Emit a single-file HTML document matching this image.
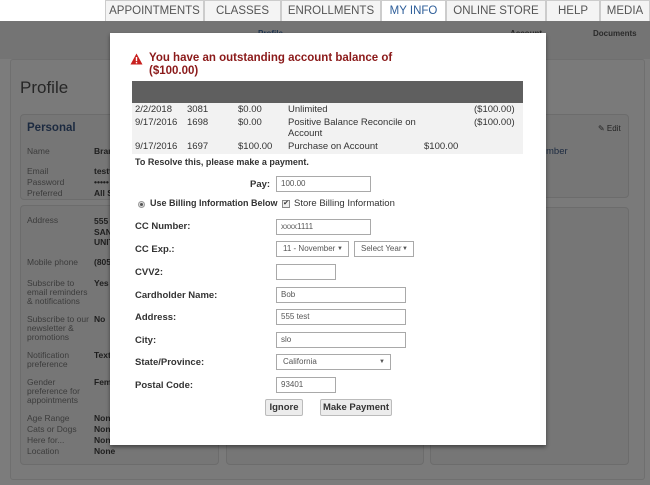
<!DOCTYPE html>
<html><head><meta charset="utf-8">
<style>
*{box-sizing:border-box;margin:0;padding:0}
body{width:650px;height:485px;overflow:hidden;position:relative;background:#7c7c7c;font-family:"Liberation Sans",Arial,sans-serif;font-size:9px;color:#333}
.a{position:absolute}
.tabs{left:0;top:0;width:650px;height:21px;background:#fff}
.tab{position:absolute;top:0;height:21px;border:1px solid #ccc;border-bottom:none;background:#f4f4f4;color:#555;font-size:11.5px;text-align:center;line-height:21px}
.bar{left:0;top:21px;width:650px;height:38px;background:#747474}
.sub{position:absolute;top:29px;font-size:8px;font-weight:bold;color:#2a2a2a}
.panel{left:10px;top:59px;width:635px;height:421px;background:#7a7a7a;border:1px solid #6f6f6f;border-radius:3px}
.card{background:#767676;border:1px solid #6c6c6c;border-radius:4px}
.lbl{position:absolute;left:27px;color:#3c3c3c;font-size:8.5px;line-height:9px}
.val{position:absolute;left:94px;color:#1e1e1e;font-weight:bold;font-size:8.5px;line-height:9px}
.modal{left:110px;top:33px;width:436px;height:412px;background:#fff;box-shadow:0 2px 4px rgba(0,0,0,.45)}
.t{position:absolute;font-size:9.5px;color:#333}
.b{position:absolute;font-size:9.5px;font-weight:bold;color:#333;white-space:nowrap}
.in{position:absolute;border:1px solid #a9a9a9;height:16px;font-size:8px;color:#555;padding-left:4px;line-height:14px;background:#fff}
.sel{position:absolute;border:1px solid #a9a9a9;height:16px;font-size:8px;color:#555;padding-left:6px;line-height:14px;background:#fff}
.sel:after{content:"▼";position:absolute;right:5px;top:0;font-size:6px}
.btn{position:absolute;border:1px solid #bbb;border-radius:2px;background:#ececec;font-size:9.5px;font-weight:bold;color:#333;text-align:center;line-height:15px;height:17px}
</style></head><body>
<div class="a tabs">
<div class="tab" style="left:105px;width:99px">APPOINTMENTS</div>
<div class="tab" style="left:204px;width:77px">CLASSES</div>
<div class="tab" style="left:281px;width:100px">ENROLLMENTS</div>
<div class="tab" style="left:381px;width:65px;background:#fff;color:#2f5f9a">MY INFO</div>
<div class="tab" style="left:446px;width:100px">ONLINE STORE</div>
<div class="tab" style="left:546px;width:54px">HELP</div>
<div class="tab" style="left:600px;width:50px">MEDIA</div>
</div>
<div class="a bar"></div>
<div class="sub" style="left:258px;color:#1f3550">Profile</div>
<div class="sub" style="left:510px">Account</div>
<div class="sub" style="left:593px">Documents</div>
<div class="a panel"></div>
<div class="a" style="left:20px;top:78px;font-size:17px;color:#262626">Profile</div>
<div class="a card" style="left:20px;top:114px;width:199px;height:86px"></div>
<div class="a" style="left:27px;top:122px;font-size:11.5px;font-weight:bold;color:#1c2a40">Personal</div>
<div class="a card" style="left:20px;top:205px;width:199px;height:260px"></div>
<div class="a card" style="left:226px;top:114px;width:198px;height:351px"></div>
<div class="a card" style="left:430px;top:114px;width:199px;height:84px"></div>
<div class="a card" style="left:430px;top:207px;width:199px;height:258px"></div>
<div class="a" style="left:598px;top:124px;font-size:8px;color:#222">✎ Edit</div>
<div class="a" style="left:546px;top:146px;font-size:9.5px;color:#1c2a40">mber</div>
<div class="lbl" style="top:147px">Name</div><div class="val" style="top:147px">Brar</div>
<div class="lbl" style="top:167px">Email</div><div class="val" style="top:167px">testt</div>
<div class="lbl" style="top:178px">Password</div><div class="val" style="top:178px">•••••</div>
<div class="lbl" style="top:189px">Preferred</div><div class="val" style="top:189px">All S</div>
<div class="lbl" style="top:216px">Address</div><div class="val" style="top:216px;line-height:10.5px">555<br>SAN<br>UNIT</div>
<div class="lbl" style="top:258px">Mobile phone</div><div class="val" style="top:258px">(805</div>
<div class="lbl" style="top:279px">Subscribe to<br>email reminders<br>&amp; notifications</div><div class="val" style="top:279px">Yes</div>
<div class="lbl" style="top:315px">Subscribe to our<br>newsletter &amp;<br>promotions</div><div class="val" style="top:315px">No</div>
<div class="lbl" style="top:351px">Notification<br>preference</div><div class="val" style="top:351px">Text</div>
<div class="lbl" style="top:378px">Gender<br>preference for<br>appointments</div><div class="val" style="top:378px">Fem</div>
<div class="lbl" style="top:414px">Age Range</div><div class="val" style="top:414px">None</div>
<div class="lbl" style="top:425px">Cats or Dogs</div><div class="val" style="top:425px">None</div>
<div class="lbl" style="top:436px">Here for...</div><div class="val" style="top:436px">None</div>
<div class="lbl" style="top:447px">Location</div><div class="val" style="top:447px">None</div>

<div class="a modal">
<svg class="a" style="left:20px;top:20px" width="13" height="12" viewBox="0 0 13 12"><path d="M6.5 0.5L12.5 11.5H0.5Z" fill="#c8201e"/><rect x="5.8" y="4" width="1.4" height="4.2" fill="#fff"/><rect x="5.8" y="9" width="1.4" height="1.4" fill="#fff"/></svg>
<div class="a" style="left:39px;top:19px;font-size:11.5px;font-weight:bold;color:#8b1a1a;line-height:13px">You have an outstanding account balance of<br>($100.00)</div>
<div class="a" style="left:22px;top:48px;width:391px;height:22px;background:#5f5f5f"></div>
<div class="a" style="left:22px;top:70px;width:391px;height:51px;background:#f2f2f2"></div>
<div class="t" style="left:25px;top:71px">2/2/2018</div><div class="t" style="left:77px;top:71px">3081</div><div class="t" style="left:128px;top:71px">$0.00</div><div class="t" style="left:178px;top:71px">Unlimited</div><div class="t" style="left:364px;top:71px">($100.00)</div>
<div class="t" style="left:25px;top:84px">9/17/2016</div><div class="t" style="left:77px;top:84px">1698</div><div class="t" style="left:128px;top:84px">$0.00</div><div class="t" style="left:178px;top:84px;line-height:11px">Positive Balance Reconcile on<br>Account</div><div class="t" style="left:364px;top:84px">($100.00)</div>
<div class="t" style="left:25px;top:108px">9/17/2016</div><div class="t" style="left:77px;top:108px">1697</div><div class="t" style="left:128px;top:108px">$100.00</div><div class="t" style="left:178px;top:108px">Purchase on Account</div><div class="t" style="left:314px;top:108px">$100.00</div>
<div class="b" style="left:25px;top:124px;font-size:9px">To Resolve this, please make a payment.</div>
<div class="b" style="left:140px;top:146px">Pay:</div><div class="in" style="left:166px;top:143px;width:95px">100.00</div>
<div class="a" style="left:28px;top:168px;width:7px;height:7px;border-radius:50%;border:1px solid #999;background:#ddd"><div style="width:3px;height:3px;border-radius:50%;background:#555;margin:1px"></div></div>
<div class="b" style="left:40px;top:165px;font-size:9px">Use Billing Information Below</div>
<div class="a" style="left:172px;top:167px;width:8px;height:8px;border:1px solid #888;background:#eee;font-size:7px;line-height:6px;text-align:center">✔</div>
<div class="t" style="left:184px;top:165px">Store Billing Information</div>
<div class="b" style="left:25px;top:188px">CC Number:</div><div class="in" style="left:166px;top:186px;width:95px">xxxx1111</div>
<div class="b" style="left:25px;top:211px">CC Exp.:</div><div class="sel" style="left:166px;top:208px;width:73px">11 - November</div><div class="sel" style="left:244px;top:208px;width:60px">Select Year</div>
<div class="b" style="left:25px;top:234px">CVV2:</div><div class="in" style="left:166px;top:231px;width:60px"></div>
<div class="b" style="left:25px;top:257px">Cardholder Name:</div><div class="in" style="left:166px;top:254px;width:130px">Bob</div>
<div class="b" style="left:25px;top:279px">Address:</div><div class="in" style="left:166px;top:276px;width:130px">555 test</div>
<div class="b" style="left:25px;top:302px">City:</div><div class="in" style="left:166px;top:299px;width:130px">slo</div>
<div class="b" style="left:25px;top:324px">State/Province:</div><div class="sel" style="left:166px;top:321px;width:115px">California</div>
<div class="b" style="left:25px;top:347px">Postal Code:</div><div class="in" style="left:166px;top:344px;width:60px">93401</div>
<div class="btn" style="left:155px;top:366px;width:38px">Ignore</div>
<div class="btn" style="left:210px;top:366px;width:72px">Make Payment</div>
</div>
</body></html>
